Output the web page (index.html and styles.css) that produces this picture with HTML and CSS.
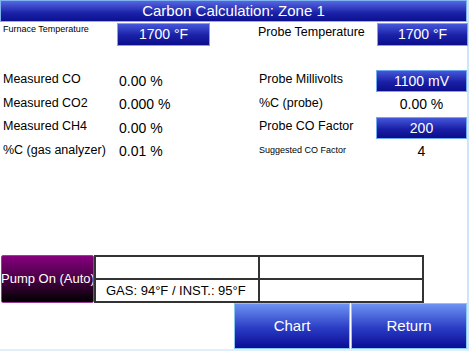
FILE: index.html
```html
<!DOCTYPE html>
<html lang="en">
<head>
    <meta charset="UTF-8">
    <title>Carbon Calculation: Zone 1</title>
    <link rel="stylesheet" href="styles.css">
</head>
<body>

<div class="screen">
    <div class="title">Carbon Calculation: Zone 1</div>

    <div class="top-row">
        <div class="label tiny">Furnace Temperature</div>
        <div class="value-btn">1700 °F</div>
        <div class="label probe-temp">Probe Temperature</div>
        <div class="value-btn">1700 °F</div>
    </div>

    <div class="readings">
        <div class="label">Measured CO</div>
        <div class="value">0.00 %</div>
        <div class="label">Probe Millivolts</div>
        <div class="value-btn">1100 mV</div>

        <div class="label">Measured CO2</div>
        <div class="value">0.000 %</div>
        <div class="label">%C (probe)</div>
        <div class="value center">0.00 %</div>

        <div class="label">Measured CH4</div>
        <div class="value">0.00 %</div>
        <div class="label">Probe CO Factor</div>
        <div class="value-btn">200</div>

        <div class="label">%C (gas analyzer)</div>
        <div class="value">0.01 %</div>
        <div class="label tiny">Suggested CO Factor</div>
        <div class="value center">4</div>
    </div>

    <div class="status">
        <div class="pump-btn">Pump On (Auto)</div>
        <table class="info">
            <tr>
                <td class="wide"></td>
                <td></td>
            </tr>
            <tr>
                <td class="wide">GAS: 94°F / INST.: 95°F</td>
                <td></td>
            </tr>
        </table>
    </div>

    <div class="nav">
        <div class="nav-btn">Chart</div>
        <div class="nav-btn">Return</div>
    </div>
</div>

</body>
</html>
```

FILE: styles.css
```css
body {
    margin: 0;
    font-family: 'Liberation Sans', Arial, sans-serif;
    background-color: #fff;
}
.screen {
    width: 467px;
    height: 349px;
    border-right: 2px solid #cfe4f8;
    border-bottom: 2px solid #e2eefa;
    display: flex;
    flex-direction: column;
    color: #000;
}
.title {
    height: 20px;
    line-height: 20px;
    border: 1px solid #7fb4ee;
    background: linear-gradient(#5666e2, #1a22a8 60%, #0b108e);
    color: #fff;
    text-align: center;
    font-size: 15px;
}
.top-row {
    display: grid;
    grid-template-columns: 114px 93px 48px 119px 91px;
    margin-top: 1px;
    padding-left: 3px;
    height: 23px;
}
.top-row .value-btn {
    grid-column: auto;
}
.top-row .probe-temp {
    grid-column: 4;
    padding-top: 2px;
}
.top-row .value-btn:nth-child(2) {
    grid-column: 2;
}
.label {
    font-size: 12.5px;
    white-space: nowrap;
}
.tiny {
    font-size: 9px;
    padding-top: 1px;
}
.value-btn {
    border: 1px solid #6faaf0;
    background: linear-gradient(#4456da, #1a20a6 55%, #0b0e8c);
    color: #fff;
    font-size: 14px;
    text-align: center;
    line-height: 21px;
    height: 21px;
    box-sizing: content-box;
}
.readings {
    display: grid;
    grid-template-columns: 116px 140px 117px 91px;
    grid-auto-rows: 23.5px;
    align-items: center;
    padding-left: 3px;
    margin-top: 23px;
}
.readings .label {
    align-self: start;
    padding-top: 3px;
}
.readings .tiny {
    padding-top: 5px;
}
.readings .value-btn {
    height: 20px;
    line-height: 20px;
}
.value {
    font-size: 14px;
    white-space: nowrap;
}
.center {
    text-align: center;
}
.status {
    display: flex;
    margin-top: auto;
    padding-left: 1px;
    height: 48px;
}
.pump-btn {
    width: 91px;
    border: 1px solid #9a3a9a;
    border-radius: 2px;
    background: linear-gradient(#86007e, #3c0038 60%, #000);
    color: #fff;
    font-size: 13px;
    line-height: 46px;
    white-space: nowrap;
    overflow: hidden;
    text-indent: -1px;
}
.info {
    width: 330px;
    border-collapse: collapse;
    border: 2px solid #999;
    font-size: 13px;
}
.info td {
    border: 2px solid #333;
    padding: 0 0 0 10px;
    height: 20px;
}
.info td.wide {
    width: 152px;
}
.nav {
    display: flex;
    justify-content: flex-end;
    gap: 1px;
    height: 46px;
}
.nav-btn {
    width: 114px;
    border: 1px solid #86c8f0;
    background: linear-gradient(#6d92f2, #2a3cc4 55%, #0a0c96);
    color: #fff;
    font-size: 15px;
    text-align: center;
    line-height: 44px;
}
```
